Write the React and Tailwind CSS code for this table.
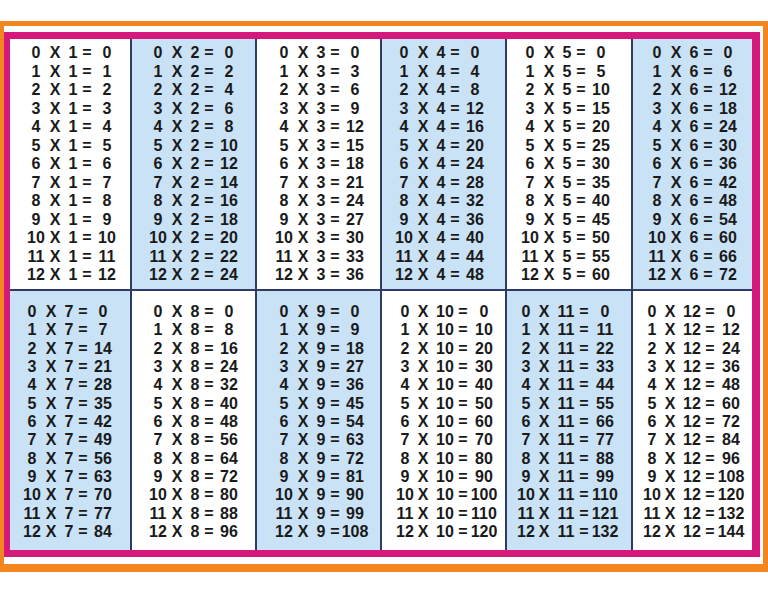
const SINGLE = "grid grid-cols-[18px_20px_16px_12px_28px]";
const DOUBLE = "grid grid-cols-[18px_18px_26px_10px_32px]";

const tables = [
  { n: 1, blue: false, pl: "pl-[17px]", top: true },
  { n: 2, blue: true, pl: "pl-[17px]", top: true },
  { n: 3, blue: false, pl: "pl-[18px]", top: true },
  { n: 4, blue: true, pl: "pl-[13px]", top: true },
  { n: 5, blue: false, pl: "pl-[14px]", top: true },
  { n: 6, blue: true, pl: "pl-[15px]", top: true },
  { n: 7, blue: true, pl: "pl-[13px]", top: false },
  { n: 8, blue: false, pl: "pl-[17px]", top: false },
  { n: 9, blue: true, pl: "pl-[18px]", top: false },
  { n: 10, blue: false, pl: "pl-[14px]", top: false },
  { n: 11, blue: true, pl: "pl-[10px]", top: false },
  { n: 12, blue: false, pl: "pl-[10px]", top: false },
];

function Slot({ children }) {
  return <span className="flex justify-center whitespace-nowrap">{children}</span>;
}

function Table({ t }) {
  const rows = Array.from({ length: 13 }, (_, i) => i);
  const tpl = t.n >= 10 ? DOUBLE : SINGLE;
  const lh = t.top ? "leading-[18.5px] h-[18.5px]" : "leading-[18.35px] h-[18.35px]";
  return (
    <div
      className={`${t.blue ? "bg-[#c9e2f6]" : "bg-white"} ${t.top ? "pt-[5px]" : "pt-[12px]"} ${t.pl}`}
    >
      {rows.map((i) => (
        <div key={i} className={`${tpl} ${lh}`}>
          <Slot>{i}</Slot>
          <Slot>X</Slot>
          <Slot>{t.n}</Slot>
          <Slot>=</Slot>
          <Slot>{i * t.n}</Slot>
        </div>
      ))}
    </div>
  );
}

export default function App() {
  return (
    <div className="w-[768px] h-[594px] bg-white pt-[21px] overflow-hidden">
      <div className="border-l-[4px] border-t-[5px] border-r-[5px] border-b-[8px] border-[#f5861f] bg-white pt-[6px] pr-[3px] pb-[7px]">
        <div className="border-l-[6px] border-t-[7px] border-r-[8px] border-b-[7px] border-[#d5197c]">
          <div
            className="grid grid-cols-[120px_123px_123px_123px_124px_119px] grid-rows-[250px_259px] gap-[2px] bg-[#2e3b66] text-[16px] font-bold text-[#1a1a1a]"
            style={{ fontFamily: '"Liberation Sans", Arial, sans-serif' }}
          >
            {tables.map((t) => (
              <Table key={t.n} t={t} />
            ))}
          </div>
        </div>
      </div>
    </div>
  );
}
